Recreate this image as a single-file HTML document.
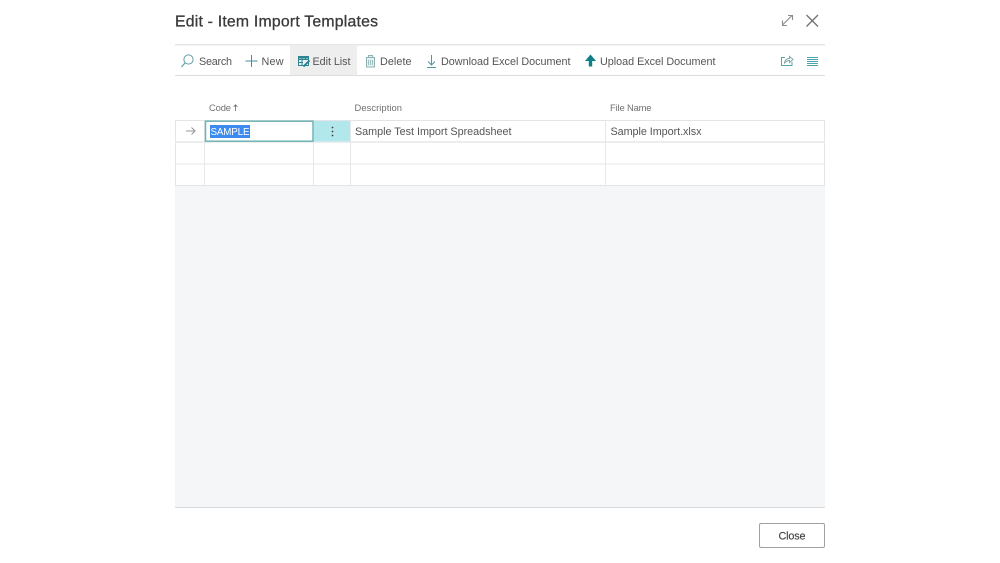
<!DOCTYPE html>
<html lang="en">
<head>
<meta charset="utf-8">
<title>Edit - Item Import Templates</title>
<style>
html,body{margin:0;padding:0;background:#fff;width:1000px;height:563px;overflow:hidden}
svg{display:block}
text{font-family:"Liberation Sans",sans-serif;font-size:10.8px;fill:#555}
.h{font-size:9.4px;fill:#707070}
.ic{fill:none;stroke:#2b8a94;stroke-width:1}
</style>
</head>
<body>
<svg width="1000" height="563" viewBox="0 0 1000 563" xmlns="http://www.w3.org/2000/svg">
<rect width="1000" height="563" fill="#fff"/>

<text x="175" y="26.500" textLength="203" lengthAdjust="spacing" style="font-size:15.800px;fill:#3a3a3a;stroke:#3a3a3a;stroke-width:.3">Edit - Item Import Templates</text>

<!-- expand / close -->
<path d="M782.500 25L792 15.500M788 15.500H792.500V20M782.500 20.500V25.500H787" fill="none" stroke="#8c8c8c" stroke-width="1.100"/>
<path d="M806.500 15L818 26.500M818 15L806.500 26.500" fill="none" stroke="#707070" stroke-width="1.300"/>

<!-- toolbar -->
<rect x="175" y="44" width="650" height="1.500" fill="#e6e6e6"/>
<rect x="290" y="45" width="67" height="30" fill="#eeeeee"/>
<rect x="175" y="75" width="650" height="1" fill="#dcdcdc"/>

<!-- search -->
<circle cx="188.500" cy="59.500" r="4.600" fill="none" style="stroke:#6a9ea5"/>
<path d="M185 63L181.500 67" fill="none" style="stroke:#5fa6ae;stroke-width:1.300"/>
<text x="199" y="65" textLength="33" lengthAdjust="spacing">Search</text>

<!-- new -->
<path d="M251.500 55V67M245.500 61H257.500" class="ic" style="stroke:#3f939c"/>
<text x="261.500" y="65" textLength="22" lengthAdjust="spacing">New</text>

<!-- edit list -->
<path d="M298.500 56.500H308.500V65.500H298.500ZM298.500 59.500H308.500M298.500 62.500H303M302 57V65.500M305.500 57V60" class="ic" style="stroke:#2a8591"/>
<rect x="298" y="56" width="11" height="2.500" fill="#2a8591"/>
<path d="M303.500 66.500L309.500 60.500" fill="none" stroke="#1f7f8a" stroke-width="1.800"/>
<text x="312.500" y="65" textLength="38" lengthAdjust="spacing">Edit List</text>

<!-- delete -->
<path d="M366.500 57.500H374.500V67H366.500ZM368.500 57.500V55.500H372.500V57.500" fill="#e4efef" stroke="#8fb3b6" stroke-width="1"/>
<path d="M368.500 60V65M370.500 60V65M372.500 60V65" fill="none" stroke="#8fb3b6" stroke-width=".8"/>
<text x="380" y="65" textLength="31.500" lengthAdjust="spacing">Delete</text>

<!-- download -->
<path d="M431.500 55V64.500M428 61.500L431.500 65L435 61.500M427 67.500H436" class="ic" style="stroke:#4a9aa3"/>
<text x="441" y="65" textLength="129.500" lengthAdjust="spacing">Download Excel Document</text>

<!-- upload -->
<path d="M590.500 54.500L585 61H588.800V66.500H592.200V61H596Z" fill="#0f7f88"/>
<text x="600" y="65" textLength="115.500" lengthAdjust="spacing">Upload Excel Document</text>

<!-- share / list -->
<path d="M785 57.500H781.500V65.500H792V62" class="ic" style="stroke:#55a5ae"/>
<path d="M784.500 63C785 60 787 58.500 789.500 58.500V56.500L793 59.500L789.500 62.500V60.500C787.500 60.500 786 61.500 784.500 63Z" class="ic" style="stroke:#7fa9ad"/>
<path d="M807 57.500H818M807 59.500H818M807 61.500H818M807 63.500H818M807 65.500H818" fill="none" stroke="#4ea3ac" stroke-width="1"/>

<!-- table headers -->
<text class="h" x="209" y="111" textLength="22" lengthAdjust="spacing">Code</text>
<path d="M235.500 105V111M233.700 106.800L235.500 104.800L237.300 106.800" fill="none" stroke="#777" stroke-width=".9"/>
<text class="h" x="354.500" y="111" textLength="47.500" lengthAdjust="spacing">Description</text>
<text class="h" x="610" y="111" textLength="41.500" lengthAdjust="spacing">File Name</text>

<!-- table -->
<rect x="175.500" y="120.500" width="649" height="65" fill="#fff" stroke="#e3e4e7"/>
<rect x="175" y="141" width="650" height="2" fill="#ecedef"/>
<rect x="175" y="163.500" width="650" height="1" fill="#e6e7ea"/>
<rect x="204" y="120" width="1" height="66" fill="#e6e7ea"/>
<rect x="313" y="120" width="1" height="66" fill="#e6e7ea"/>
<rect x="350" y="120" width="1" height="66" fill="#e6e7ea"/>
<rect x="605" y="120" width="1" height="66" fill="#e6e7ea"/>

<rect x="314" y="121" width="36" height="20.500" fill="#b2e8ec"/>
<rect x="205.500" y="121.200" width="107.500" height="20" fill="#fff" stroke="#6fb3b3" stroke-width="1.500"/>
<rect x="210" y="125" width="40" height="13" fill="#3d8bef"/>
<text x="210.500" y="135.200" textLength="39" lengthAdjust="spacing" style="fill:#fff;font-size:9.800px">SAMPLE</text>

<!-- row arrow -->
<path d="M186 131H195M191.500 127.500L195 131L191.500 134.500" fill="none" stroke="#949494" stroke-width="1"/>

<!-- kebab -->
<circle cx="332.500" cy="127.500" r=".9" fill="#3e3e3e"/>
<circle cx="332.500" cy="131.500" r=".9" fill="#3e3e3e"/>
<circle cx="332.500" cy="135.500" r=".9" fill="#3e3e3e"/>

<text x="355" y="135.200" textLength="156.500" lengthAdjust="spacing">Sample Test Import Spreadsheet</text>
<text x="610.500" y="135.200" textLength="91" lengthAdjust="spacing">Sample Import.xlsx</text>

<!-- grey area -->
<rect x="175" y="186" width="650" height="321" fill="#f5f6f7"/>
<rect x="175" y="507" width="650" height="1" fill="#d9dadc"/>

<!-- close -->
<rect x="759.500" y="523.500" width="65" height="24" rx="1.500" fill="#fff" stroke="#a0a0a0"/>
<text x="778.500" y="539.500" textLength="27" lengthAdjust="spacing" style="fill:#444;stroke:#444;stroke-width:.15">Close</text>
</svg>
</body>
</html>
